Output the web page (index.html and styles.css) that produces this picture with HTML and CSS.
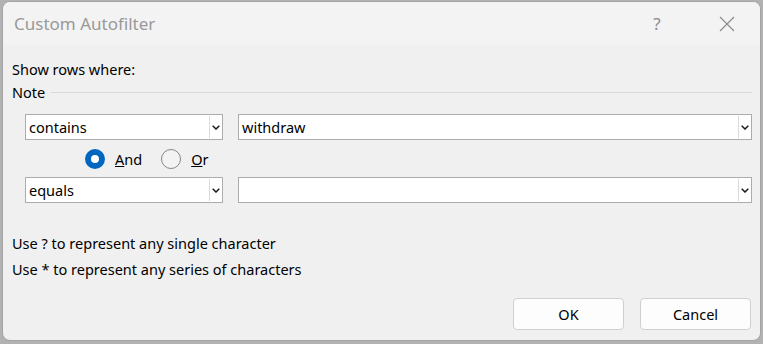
FILE: index.html
```html
<!DOCTYPE html>
<html lang="en">
<head>
    <meta charset="UTF-8">
    <title>Custom Autofilter</title>
    <link rel="stylesheet" href="styles.css">
</head>
<body>

    <div class="dialog">
        <div class="titlebar">
            <span class="title">Custom Autofilter</span>
            <span class="help">?</span>
            <span class="close">
                <svg width="16" height="16" viewBox="0 0 16 16"><path d="M1 1 L15 15 M15 1 L1 15" stroke="#8c8c8c" stroke-width="1.2" fill="none"/></svg>
            </span>
        </div>

        <div class="content">
            <div class="label">Show rows where:</div>
            <div class="group">
                <span>Note</span>
                <span class="rule"></span>
            </div>

            <div class="criteria">
                <div class="combo small">
                    <span class="value">contains</span>
                    <span class="drop"><svg width="8" height="5" viewBox="0 0 8 5"><path d="M0.7 0.7 L4 4 L7.3 0.7" stroke="#1a1a1a" stroke-width="1.5" fill="none"/></svg></span>
                </div>
                <div class="combo wide">
                    <span class="value">withdraw</span>
                    <span class="drop"><svg width="8" height="5" viewBox="0 0 8 5"><path d="M0.7 0.7 L4 4 L7.3 0.7" stroke="#1a1a1a" stroke-width="1.5" fill="none"/></svg></span>
                </div>
            </div>

            <div class="radios">
                <label class="radio"><span class="dot checked"></span><span><u>A</u>nd</span></label>
                <label class="radio"><span class="dot"></span><span><u>O</u>r</span></label>
            </div>

            <div class="criteria">
                <div class="combo small">
                    <span class="value">equals</span>
                    <span class="drop"><svg width="8" height="5" viewBox="0 0 8 5"><path d="M0.7 0.7 L4 4 L7.3 0.7" stroke="#1a1a1a" stroke-width="1.5" fill="none"/></svg></span>
                </div>
                <div class="combo wide">
                    <span class="value"></span>
                    <span class="drop"><svg width="8" height="5" viewBox="0 0 8 5"><path d="M0.7 0.7 L4 4 L7.3 0.7" stroke="#1a1a1a" stroke-width="1.5" fill="none"/></svg></span>
                </div>
            </div>

            <div class="hints">
                <p>Use ? to represent any single character</p>
                <p>Use * to represent any series of characters</p>
            </div>

            <div class="buttons">
                <button class="btn">OK</button>
                <button class="btn">Cancel</button>
            </div>
        </div>
    </div>

</body>
</html>
```

FILE: styles.css
```css
body {
    margin: 0;
    padding: 0;
    background-color: #b2b2b2;
    font-family: 'Noto Sans', 'Liberation Sans', sans-serif;
    color: #000;
}

.dialog {
    margin: 1px 0 0 2px;
    width: 759px;
    height: 340px;
    box-sizing: border-box;
    background-color: #f0f0f0;
    border: 1px solid #a4a4a4;
    border-radius: 8px;
    overflow: hidden;
    display: flex;
    flex-direction: column;
}

.titlebar {
    height: 43px;
    background-color: #f3f3f3;
    display: flex;
    align-items: center;
    padding-left: 11px;
}
.title {
    flex: 1;
    color: #999;
    font-size: 17px;
}
.help {
    color: #8c8c8c;
    font-size: 17px;
    width: 20px;
    text-align: center;
    margin-right: 52px;
}
.close {
    display: flex;
    margin-right: 25px;
}

.content {
    padding: 14px 8px 0 9px;
    font-size: 14.5px;
}

.label {
    line-height: 20px;
    height: 23px;
}

.group {
    display: flex;
    align-items: center;
    line-height: 20px;
    gap: 6px;
}
.rule {
    flex: 1;
    border-top: 1px solid #d9d9d9;
}

.criteria {
    display: flex;
    gap: 15px;
    padding-left: 13px;
    margin-top: 12px;
}
.radios + .criteria {
    margin-top: 8px;
}

.combo {
    height: 26px;
    box-sizing: border-box;
    background-color: #fff;
    border: 1px solid #acacac;
    display: flex;
    flex-shrink: 0;
}
.combo.small {
    width: 198px;
}
.combo.wide {
    width: 514px;
}
.value {
    flex: 1;
    padding-left: 3px;
    line-height: 24px;
}
.drop {
    width: 12px;
    margin: 1px 0;
    border-left: 1px solid #dadada;
    display: flex;
    align-items: center;
    justify-content: center;
}

.radios {
    display: flex;
    gap: 19px;
    margin-top: 9px;
    padding-left: 73px;
    height: 20px;
}
.radio {
    display: flex;
    align-items: center;
    gap: 10px;
}
.dot {
    width: 20px;
    height: 20px;
    box-sizing: border-box;
    border-radius: 50%;
    border: 1px solid #858585;
    background-color: #f3f3f3;
}
.dot.checked {
    border: 6px solid #0067c0;
    background-color: #fff;
}

.hints {
    margin-top: 27px;
}
.hints p {
    margin: 0;
    line-height: 26px;
}

.buttons {
    display: flex;
    justify-content: flex-end;
    gap: 16px;
    margin-top: 16px;
    padding-right: 1px;
}
.btn {
    width: 111px;
    height: 32px;
    background-color: #fdfdfd;
    border: 1px solid #d0d0d0;
    border-radius: 4px;
    font-family: inherit;
    font-size: 14.5px;
    color: #000;
}
```
